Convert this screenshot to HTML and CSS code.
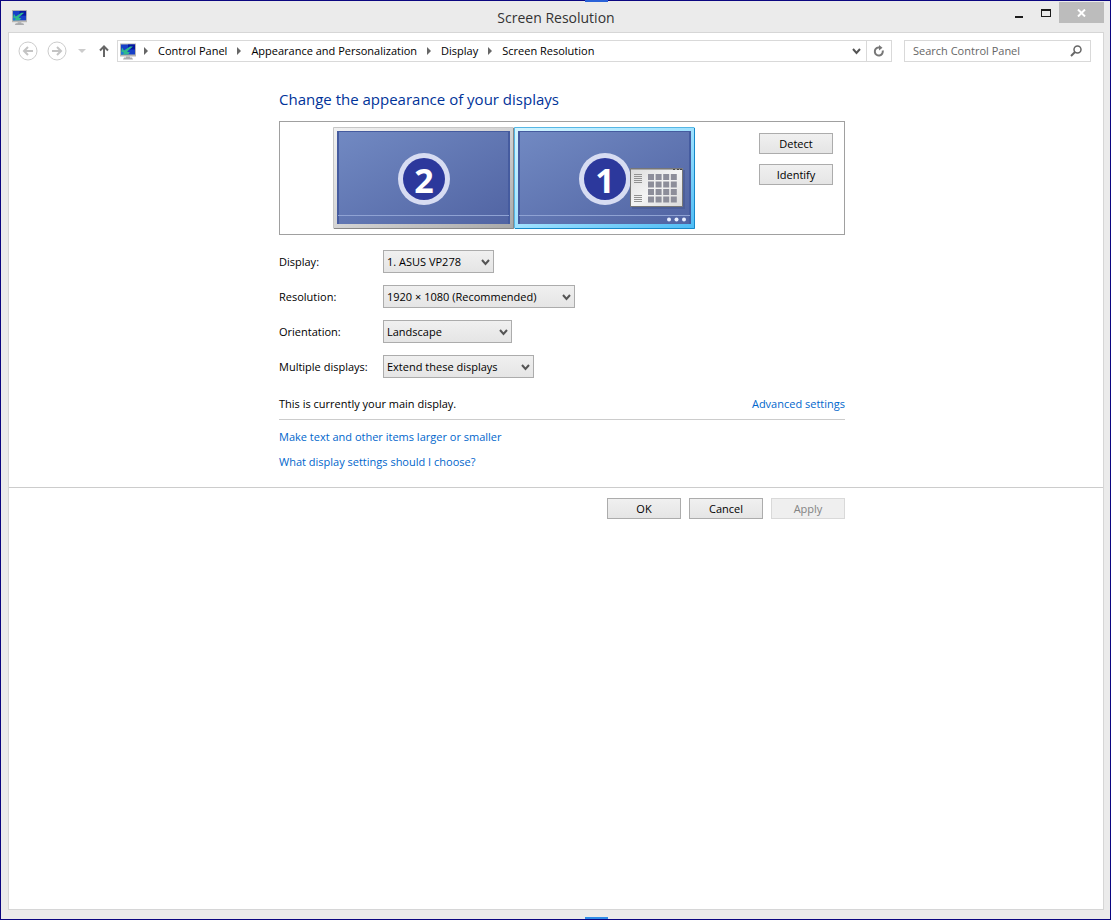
FILE: index.html
```html
<!DOCTYPE html>
<html lang="en">
<head>
<meta charset="utf-8">
<title>Screen Resolution</title>
<link rel="stylesheet" href="styles.css">
</head>
<body>
<svg class="defs" aria-hidden="true">
  <defs>
    <linearGradient id="scr" x1="0" y1="0" x2="1" y2="1"><stop offset="0" stop-color="#7189c2"/><stop offset="1" stop-color="#5164a3"/></linearGradient>
    <linearGradient id="grey" x1="0" y1="0" x2="1" y2="1"><stop offset="0" stop-color="#f2f2f2"/><stop offset=".5" stop-color="#d4d4d4"/><stop offset="1" stop-color="#a8a8a8"/></linearGradient>
    <linearGradient id="cyan" x1="0" y1="0" x2="1" y2="1"><stop offset="0" stop-color="#d4f5ff"/><stop offset=".5" stop-color="#a0e2ff"/><stop offset="1" stop-color="#4dbcf5"/></linearGradient>
    <linearGradient id="panel" x1="0" y1="0" x2="1" y2="1"><stop offset="0" stop-color="#dcdcdc"/><stop offset=".5" stop-color="#f4f4f4"/><stop offset="1" stop-color="#dadada"/></linearGradient>
    <symbol id="monitor" viewBox="0 0 16 16">
      <path d="M0 0h16v13H0z" fill="#b9b7b3"/>
      <path d="M1 1h14v10H1z" fill="#1740c8"/>
      <path d="M8 1h7v5H8z" fill="#0616a0"/>
      <path d="M2 4l2 3 6-4h3L7 8l3 1-2 2H1V9z" fill="#2fb98d"/>
      <path d="M1 8l3 1-1 2H1z" fill="#1f78d8"/>
      <path d="M6 13h4v1h2l1 2H3l1-2h2z" fill="#a9aaad"/>
    </symbol>
    <symbol id="chev" viewBox="0 0 9 7"><path d="M1 1l3.500 4L8 1" fill="none" stroke="#555" stroke-width="2"/></symbol>
    <symbol id="tri" viewBox="0 0 4 8"><path d="M0 0l4 4-4 4z" fill="#666"/></symbol>
  </defs>
</svg>
<div class="window">
  <header class="titlebar">
    <svg class="app-icon"><use href="#monitor"/></svg>
    <h1 class="title">Screen Resolution</h1>
    <div class="caption">
      <button class="cap" aria-label="Minimize"><svg width="8" height="12"><path d="M0 9h8v2H0z" fill="#1c1c1c"/></svg></button>
      <button class="cap" aria-label="Maximize"><svg width="10" height="12"><path d="M0 2h10v8H0zM1 4v5h8V4z" fill="#1c1c1c" fill-rule="evenodd"/></svg></button>
      <button class="cap close" aria-label="Close"><svg width="9" height="8"><path d="M1 .5l7 7M8 .5l-7 7" stroke="#fff" stroke-width="2"/></svg></button>
    </div>
  </header>
  <main class="client">
    <nav class="nav">
      <button class="bare" aria-label="Back"><svg width="20" height="20" fill="none"><circle cx="10" cy="10" r="9" stroke="#ccc"/><path d="M15 10H6M10 6l-4 4 4 4" stroke="#c4c4c4" stroke-width="2"/></svg></button>
      <button class="bare fwd" aria-label="Forward"><svg width="20" height="20" fill="none"><circle cx="10" cy="10" r="9" stroke="#ccc"/><path d="M5 10h9M10 6l4 4-4 4" stroke="#c4c4c4" stroke-width="2"/></svg></button>
      <button class="bare recent" aria-label="Recent locations"><svg width="8" height="4"><path d="M0 0h8L4 4z" fill="#ccc"/></svg></button>
      <button class="bare up" aria-label="Up"><svg width="10" height="12" fill="none"><path d="M5 12V2M1 5.500L5 1.500l4 4" stroke="#666" stroke-width="2"/></svg></button>
      <div class="address">
        <svg class="loc-icon"><use href="#monitor"/></svg>
        <svg class="tri"><use href="#tri"/></svg><a href="#">Control Panel</a>
        <svg class="tri"><use href="#tri"/></svg><a href="#">Appearance and Personalization</a>
        <svg class="tri"><use href="#tri"/></svg><a href="#">Display</a>
        <svg class="tri"><use href="#tri"/></svg><a href="#">Screen Resolution</a>
        <button class="bare drop" aria-label="Previous locations"><svg class="chev"><use href="#chev"/></svg></button>
        <button class="bare refresh" aria-label="Refresh"><svg width="12" height="12" fill="none"><path d="M7 2.500H5.500a4 4 0 1 0 4.200 3" stroke="#777" stroke-width="2"/><path d="M6 0l3.500 2.700L6 5.500z" fill="#777"/></svg></button>
      </div>
      <label class="search"><input type="text" placeholder="Search Control Panel" aria-label="Search Control Panel"><svg width="12" height="12" fill="none"><circle cx="7.500" cy="4.500" r="3.500" stroke="#666" stroke-width="1.500"/><path d="M5 7l-4 4" stroke="#666" stroke-width="2"/></svg></label>
    </nav>
    <section class="content">
      <h2 class="heading">Change the appearance of your displays</h2>
      <div class="preview">
        <div class="monitors">
          <svg width="181" height="102" role="img" aria-label="Display 2">
            <rect width="181" height="102" rx="1" fill="url(#grey)"/>
            <path d="M.500 101V.500H180" fill="none" stroke="#c6c6c6"/><path d="M180.500 1v100.500H1" fill="none" stroke="#888"/>
            <rect x="4" y="4" width="173" height="93" fill="#455b9f"/>
            <rect x="6" y="5" width="169" height="92" fill="url(#scr)"/>
            <path d="M5 88.500h171" stroke="#8fa2d3"/>
            <circle cx="91" cy="52" r="26" fill="#d7dcf2"/><circle cx="91" cy="52" r="21" fill="#2c389c"/>
            <text class="num" x="91" y="66">2</text>
          </svg>
          <svg width="181" height="102" role="img" aria-label="Display 1">
            <rect width="181" height="102" rx="1" fill="url(#cyan)"/>
            <path d="M.500 101V.500H180" fill="none" stroke="#56b7e5"/><path d="M180.500 1v100.500H1" fill="none" stroke="#1688c8"/>
            <rect x="4" y="4" width="173" height="93" fill="#455b9f"/>
            <rect x="6" y="5" width="169" height="92" fill="url(#scr)"/>
            <path d="M5 88.500h171" stroke="#8fa2d3"/>
            <circle cx="91" cy="52" r="26" fill="#d7dcf2"/><circle cx="91" cy="52" r="21" fill="#2c389c"/>
            <text class="num" x="91" y="66">1</text>
            <path d="M118 43h53v39h-53z" fill="#43548a" opacity=".5"/>
            <path d="M116.500 41.500h52v38h-52z" fill="url(#panel)" stroke="#777"/>
            <path d="M117 42.500h51" stroke="#aaa"/><path d="M159 42h2v1h-2zM163 42h2v1h-2zM166 42h2v1h-2z" fill="#444"/>
            <path d="M120 47.500h8M120 49.500h8M120 51.500h8M120 53.500h8M120 55.500h8M120 68.500h8M120 70.500h8M120 72.500h8M120 74.500h8" stroke="#929292"/>
            <path d="M134 50h29M134 57.500h29M134 65h29M134 72.500h29" stroke="#8d8e9a" stroke-width="6" stroke-dasharray="6 1.600"/>
            <g fill="#e8efff"><circle cx="155" cy="92.500" r="2"/><circle cx="162.500" cy="92.500" r="2"/><circle cx="170" cy="92.500" r="2"/></g>
          </svg>
        </div>
        <div class="side"><button class="btn">Detect</button><button class="btn">Identify</button></div>
      </div>
      <form class="settings">
        <label for="display">Display:</label>
        <span class="pick w-display"><select id="display"><option>1. ASUS VP278</option></select><svg class="chev"><use href="#chev"/></svg></span>
        <label for="resolution">Resolution:</label>
        <span class="pick w-resolution"><select id="resolution"><option>1920 × 1080 (Recommended)</option></select><svg class="chev"><use href="#chev"/></svg></span>
        <label for="orientation">Orientation:</label>
        <span class="pick w-orientation"><select id="orientation"><option>Landscape</option></select><svg class="chev"><use href="#chev"/></svg></span>
        <label for="multiple">Multiple displays:</label>
        <span class="pick w-multiple"><select id="multiple"><option>Extend these displays</option></select><svg class="chev"><use href="#chev"/></svg></span>
      </form>
      <div class="status"><span>This is currently your main display.</span><a class="link" href="#">Advanced settings</a></div>
      <div class="links"><a class="link" href="#">Make text and other items larger or smaller</a><a class="link" href="#">What display settings should I choose?</a></div>
    </section>
    <footer class="footer"><div class="actions"><button class="btn">OK</button><button class="btn">Cancel</button><button class="btn" disabled>Apply</button></div></footer>
  </main>
  <i class="marker top"></i><i class="marker bottom"></i>
</div>
</body>
</html>
```
FILE: styles.css
```css
* { box-sizing: border-box; }
body { margin: 0; font: 11px/16px "Open Sans", "Noto Sans", sans-serif; color: #000; }
button, input, select { font: inherit; color: inherit; }
svg { display: block; flex: none; }
.defs { position: absolute; width: 0; height: 0; }
.window { position: relative; display: flex; flex-direction: column; min-height: 100vh; padding: 1px 6px 9px 7px; border: 1px solid #0b0680; background: #ebebeb; }
.titlebar { display: grid; grid-template-columns: 1fr auto 1fr; height: 30px; }
.app-icon { width: 15px; height: 15px; margin: 8px 0 0 4px; }
.title { margin: 4px 0 0; font-size: 14px; line-height: 24px; font-weight: 400; color: #333; }
.caption { display: flex; justify-content: flex-end; }
.cap { display: flex; justify-content: center; align-items: center; width: 27px; height: 21px; padding: 0; border: 0; background: none; }
.close { width: 45px; background: #bcbcbc; }
.client { flex: 1; border: 1px solid #d6d6d6; background: #fff; }
.nav { display: flex; align-items: center; padding: 7px 12px 0 9px; }
.bare { display: flex; justify-content: center; align-items: center; padding: 0; border: 0; background: none; }
.fwd { margin-left: 9px; }
.recent { margin-left: 11px; }
.up { margin: 0 8px 0 13px; }
.address { display: flex; align-items: center; flex: 1; height: 22px; padding-left: 2px; border: 1px solid #d9d9d9; }
.address a { color: #000; text-decoration: none; white-space: nowrap; }
.loc-icon { width: 16px; height: 17px; }
.tri { width: 4px; height: 8px; margin: 0 10px; }
.loc-icon + .tri { margin-left: 8px; }
.chev { width: 9px; height: 7px; }
.drop { width: 20px; height: 20px; margin-left: auto; }
.refresh { width: 25px; height: 20px; border-left: 1px solid #d9d9d9; }
.search { display: flex; align-items: center; width: 187px; height: 22px; margin-left: 12px; padding: 0 8px; border: 1px solid #d9d9d9; }
.search input { flex: 1; min-width: 0; padding: 0; border: 0; outline: 0; background: none; }
.search input::placeholder { color: #666; opacity: 1; }
.content, .actions { width: 100%; max-width: 578px; margin: 0 auto; padding-left: 12px; }
.content { padding-top: 25px; padding-bottom: 17px; }
.heading { margin: 0 0 10px; font-size: 15px; line-height: 24px; font-weight: 400; color: #039; }
.preview { display: flex; justify-content: space-between; min-height: 114px; padding: 5px 11px 5px 53px; border: 1px solid #a0a0a0; }
.monitors { display: flex; }
.side { display: flex; flex-direction: column; gap: 10px; padding-top: 6px; }
.btn { width: 74px; height: 21px; padding: 0; border: 1px solid #acacac; background: linear-gradient(#f0f0f0, #e5e5e5); }
.btn:disabled { border-color: #d9d9d9; background: #efefef; color: #838383; }
.num { font: bold 34px "Open Sans", "Noto Sans", sans-serif; fill: #fff; text-anchor: middle; }
.settings { display: grid; grid-template-columns: 104px 1fr; grid-auto-rows: 23px; row-gap: 12px; align-items: center; margin: 15px 0 18px; }
.pick { position: relative; }
.pick select { width: 100%; height: 23px; padding: 0 3px; border: 1px solid #acacac; border-radius: 0; background: linear-gradient(#f0f0f0, #e5e5e5); appearance: none; }
.pick .chev { position: absolute; right: 4px; top: 9px; pointer-events: none; }
.w-display { width: 111px; }
.w-resolution { width: 192px; }
.w-orientation { width: 129px; }
.w-multiple { width: 151px; }
.status { display: flex; justify-content: space-between; padding-bottom: 7px; border-bottom: 1px solid #ccc; }
.link { color: #06c; text-decoration: none; }
.links { display: flex; flex-direction: column; align-items: flex-start; gap: 9px; padding-top: 9px; }
.footer { padding-top: 10px; border-top: 1px solid #ccc; }
.actions { display: flex; justify-content: flex-end; gap: 8px; }
.marker { position: absolute; left: 584px; width: 23px; height: 2px; background: #2f8ce8; }
.top { top: -1px; background: #2a62d8; }
.bottom { bottom: 0; }
```
